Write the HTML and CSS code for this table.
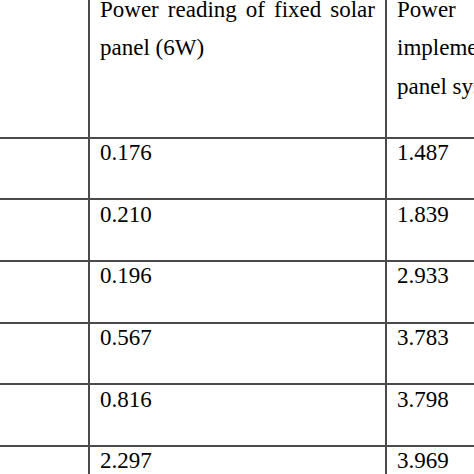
FILE: index.html
```html
<!DOCTYPE html>
<html lang="en">
<head>
<meta charset="utf-8">
<title>Power readings</title>
<link rel="stylesheet" href="styles.css">
</head>
<body class="page">
<table class="readings">
  <colgroup>
    <col class="c-label">
    <col class="c-fixed">
    <col class="c-impl">
  </colgroup>
  <thead>
    <tr class="head-row">
      <th class="cell label"></th>
      <th class="cell head">Power reading of fixed solar panel (6W)</th>
      <th class="cell head">Power reading of implemented solar panel system</th>
    </tr>
  </thead>
  <tbody>
    <tr class="data-row"><td class="cell label"></td><td class="cell">0.176</td><td class="cell">1.487</td></tr>
    <tr class="data-row"><td class="cell label"></td><td class="cell">0.210</td><td class="cell">1.839</td></tr>
    <tr class="data-row"><td class="cell label"></td><td class="cell">0.196</td><td class="cell">2.933</td></tr>
    <tr class="data-row"><td class="cell label"></td><td class="cell">0.567</td><td class="cell">3.783</td></tr>
    <tr class="data-row"><td class="cell label"></td><td class="cell">0.816</td><td class="cell">3.798</td></tr>
    <tr class="data-row"><td class="cell label"></td><td class="cell">2.297</td><td class="cell">3.969</td></tr>
  </tbody>
</table>
</body>
</html>
```

FILE: styles.css
```css
html, body {
  margin: 0;
  padding: 0;
  overflow: hidden;
  background: #ffffff;
}

.page {
  width: 474px;
  height: 474px;
  font-family: "Liberation Serif", "Times New Roman", serif;
  font-size: 23px;
  color: #000000;
}

.readings {
  border-collapse: collapse;
  table-layout: fixed;
  width: 607px;
  margin-top: -11px;
}

.c-label { width: 89px; }
.c-fixed { width: 297px; }
.c-impl { width: 221px; }

.cell {
  border: 2px solid #4a4a4a;
  padding: 1.5px 10px 0 10px;
  vertical-align: top;
  text-align: left;
  font-weight: normal;
  line-height: 1.15;
}

.cell.label {
  border-left: none;
}

.head-row .cell {
  border-top: none;
}

.head {
  text-align: justify;
  line-height: 38.5px;
}

.head-row {
  height: 148.5px;
}

.data-row {
  height: 61.7px;
}
```
